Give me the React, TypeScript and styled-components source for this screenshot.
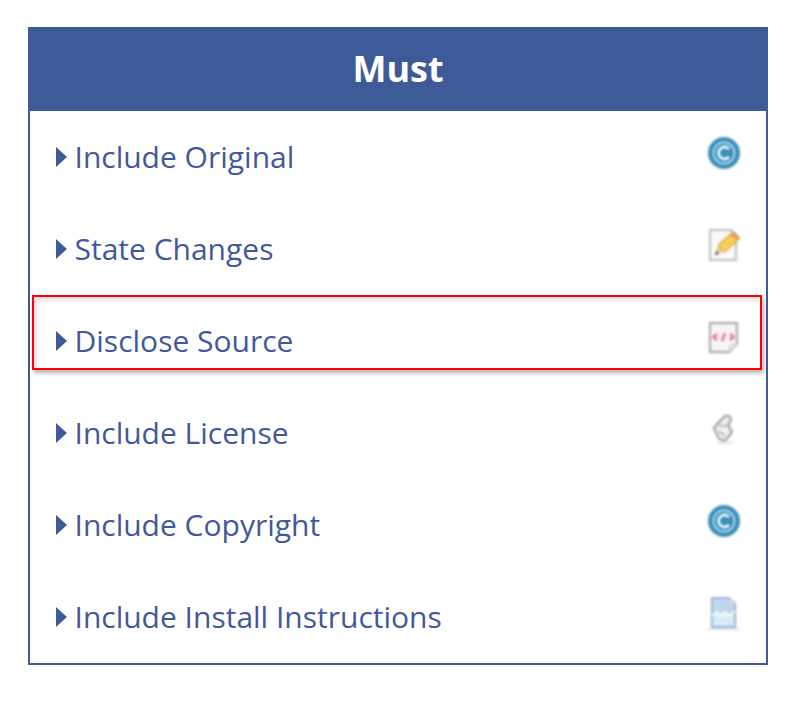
import React from "react";
import styled, { createGlobalStyle } from "styled-components";

const GlobalStyle = createGlobalStyle`
  html, body {
    margin: 0;
    padding: 0;
    background: #fff;
    font-family: "Open Sans", "Liberation Sans", sans-serif;
  }
`;

const Page = styled.div`
  width: 795px;
  height: 706px;
  padding: 27px 0 0 28px;
  box-sizing: border-box;
`;

const Panel = styled.section`
  width: 740px;
  box-sizing: border-box;
  border: 2px solid #3f5a99;
  border-top: 0;
  background: #fff;
`;

const Header = styled.h2`
  margin: 0 -2px;
  height: 84px;
  box-sizing: border-box;
  padding-bottom: 2px;
  display: flex;
  align-items: center;
  justify-content: center;
  background: #3f5a99;
  color: #fff;
  font-size: 36px;
  font-weight: 700;
`;

const Row = styled.div<{ $marked?: boolean }>`
  position: relative;
  height: 92px;
  display: flex;
  align-items: center;
  padding: 0 25px 0 26px;
  color: #41599a;
  font-size: 30px;

  ${(p) =>
    p.$marked &&
    `
    &::after {
      content: "";
      position: absolute;
      left: 2px;
      top: 0;
      width: 730px;
      height: 75px;
      box-sizing: border-box;
      border: 2px solid #ff0000;
      box-shadow: 2px 3px 4px rgba(0, 0, 0, 0.3), inset 3px 3px 5px rgba(0, 0, 0, 0.14);
    }
  `}
`;

const Arrow = styled.span`
  width: 0;
  height: 0;
  border-style: solid;
  border-width: 10px 0 10px 11px;
  border-color: transparent transparent transparent #3f5a99;
  margin-right: 7.5px;
  flex: none;
`;

const Label = styled.span`
  flex: 1;
  position: relative;
  top: -1px;
`;

const IconBox = styled.span`
  width: 34px;
  height: 34px;
  flex: none;
  position: relative;
  top: -4px;
  svg {
    display: block;
    filter: blur(0.9px);
  }
`;

const CopyIcon = () => (
  <svg width="34" height="34" viewBox="0 0 34 34">
    <circle cx="17" cy="17" r="16" fill="#3c8fb8" />
    <circle cx="17" cy="17" r="10.5" fill="none" stroke="#a6d4e6" strokeWidth="2" />
    <path d="M22 13 A6 6 0 1 0 22 21" fill="none" stroke="#eef8fc" strokeWidth="2.8" />
  </svg>
);

const PencilIcon = () => (
  <svg width="34" height="34" viewBox="0 0 34 34">
    <path d="M3 2 H24 L29 6 V32 H3 Z" fill="#fafafa" stroke="#c8c8c8" strokeWidth="2.4" />
    <path d="M11 17 L26 4 L33 10 L18 24 Z" fill="#f4d25a" stroke="#e3a83a" strokeWidth="1.2" />
    <path d="M26 4 L33 10 L30 13 L23 7 Z" fill="#e5a066" />
    <path d="M11 17 L18 24 L8 27 Z" fill="#e8c9a0" />
    <path d="M9 23 L12 26 L8 27 Z" fill="#5a4a3a" />
  </svg>
);

const SourceIcon = () => (
  <svg width="34" height="34" viewBox="0 0 34 34">
    <path d="M3 3 H30 V24 L22 32 H3 Z" fill="#f6f6f6" stroke="#b4b4b4" strokeWidth="2.4" />
    <path d="M22 32 L23 25 L30 24 Z" fill="#e6e6e6" stroke="#d0d0d0" strokeWidth="1" />
    <path
      d="M10 14 L6.5 17 L10 20 M23 14 L26.5 17 L23 20 M18 13 L15 21"
      fill="none"
      stroke="#ec6fa8"
      strokeWidth="2.6"
    />
  </svg>
);

const LicenseIcon = () => (
  <svg width="34" height="34" viewBox="0 0 34 34">
    <path
      d="M12 10 L18 4 Q24 3 24 8 L21 13 L25 20 L19 28 Q13 29 11 25 L7 16 Z"
      fill="#f0f0f0"
      stroke="#aeaeae"
      strokeWidth="2.6"
    />
    <path d="M11 13 Q17 15 21 13 M12 19 L18 24" fill="none" stroke="#bdbdbd" strokeWidth="2.2" />
    <path d="M10 31 H26" stroke="#e4e4e4" strokeWidth="2" />
  </svg>
);

const InstallIcon = () => (
  <svg width="34" height="34" viewBox="0 0 34 34">
    <path d="M5 2 H22 L28 8 V31 H5 Z" fill="#bfd6ec" stroke="#9db7d8" strokeWidth="2.2" />
    <path d="M22 2 V8 H28 Z" fill="#eef3f9" stroke="#a9bfda" strokeWidth="1" />
    <path d="M6 20 L10 16 L14 20 L18 16 L22 20 L27 15 V30 H6 Z" fill="#d8e9f6" />
    <path d="M5 20 L10 16 L14 20 L18 16 L22 20 L28 15" fill="none" stroke="#fff" strokeWidth="1.8" />
    <path d="M0 33 H32" stroke="#d8d8d8" strokeWidth="1.5" />
  </svg>
);

const items = [
  { label: "Include Original", icon: <CopyIcon /> },
  { label: "State Changes", icon: <PencilIcon /> },
  { label: "Disclose Source", icon: <SourceIcon />, marked: true },
  { label: "Include License", icon: <LicenseIcon /> },
  { label: "Include Copyright", icon: <CopyIcon /> },
  { label: "Include Install Instructions", icon: <InstallIcon /> },
];

const App: React.FC = () => {
  return (
    <Page>
      <GlobalStyle />
      <Panel>
        <Header>Must</Header>
        {items.map((item) => (
          <Row key={item.label} $marked={item.marked}>
            <Arrow />
            <Label>{item.label}</Label>
            <IconBox>{item.icon}</IconBox>
          </Row>
        ))}
      </Panel>
    </Page>
  );
};

export default App;
